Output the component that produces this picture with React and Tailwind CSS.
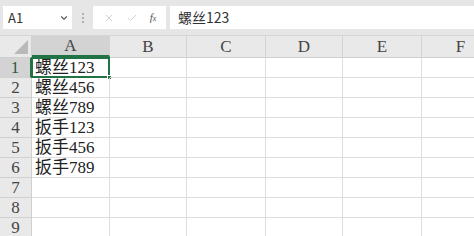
import { ChevronDown, X, Check } from "lucide-react";

const cols = ["A", "B", "C", "D", "E", "F"];
const widths = ["w-[78px]", "w-[77px]", "w-[79px]", "w-[77px]", "w-[79px]", "w-[78px]"];
const data = ["螺丝123", "螺丝456", "螺丝789", "扳手123", "扳手456", "扳手789"];
const rows = [1, 2, 3, 4, 5, 6, 7, 8, 9];

const serif = "font-['Liberation_Serif','Noto_Sans_CJK_SC',serif]";

export default function App() {
  return (
    <div className="w-[474px] h-[236px] overflow-hidden bg-white font-['Noto_Sans_CJK_SC',sans-serif]">
      {/* formula bar */}
      <div className="flex h-[36px] items-start bg-[#e6e6e6] pt-[6px] pl-[3px] border-b border-[#d5d5d5]">
        <div className="flex h-[23px] w-[69px] items-center justify-between bg-white pl-[5px] pr-[3px] text-[13px] text-[#333]">
          <span>A1</span>
          <ChevronDown size={10} strokeWidth={3} className="text-[#666]" />
        </div>
        <div className="flex h-[23px] w-[21px] flex-col items-center justify-center gap-[2px]">
          <span className="h-[2px] w-[2px] bg-[#b0b0b0]" />
          <span className="h-[2px] w-[2px] bg-[#b0b0b0]" />
          <span className="h-[2px] w-[2px] bg-[#b0b0b0]" />
        </div>
        <div className="flex h-[23px] w-[73px] items-center justify-around bg-white px-[4px]">
          <X size={12} strokeWidth={1.5} className="text-[#c4c4c4]" />
          <Check size={12} strokeWidth={1.5} className="text-[#c4c4c4]" />
          <span className={`${serif} italic text-[11px] text-[#555]`}>
            f<span className="text-[8px]">x</span>
          </span>
        </div>
        <div className="ml-[4px] flex h-[23px] flex-1 items-center bg-white pl-[8px] text-[14px] text-[#333]">
          螺丝123
        </div>
      </div>

      {/* sheet */}
      <div className="flex h-[22px] bg-[#e9e9e9] border-b border-[#cfcfcf]">
        <div className="relative w-[32px] shrink-0 border-r border-[#d0d0d0]">
          <div className="absolute bottom-[3px] right-[3px] h-0 w-0 [border-bottom:14px_solid_#b9b9b9] [border-left:14px_solid_transparent]" />
        </div>
        {cols.map((c, i) => (
          <div
            key={c}
            className={`${widths[i]} shrink-0 flex items-center justify-center border-r border-[#d4d4d4] ${serif} text-[17px] text-[#444] ${
              i === 0 ? "bg-[#d3d3d3] border-b-2 border-b-[#217346]" : ""
            }`}
          >
            {c}
          </div>
        ))}
      </div>
      {rows.map((r) => (
        <div key={r} className="flex h-[20px]">
          <div
            className={`w-[32px] shrink-0 flex items-center justify-center border-r border-b border-[#d0d0d0] ${serif} text-[17px] ${
              r === 1 ? "bg-[#d3d3d3] text-[#2b5b3e] border-r-2 border-r-[#217346]" : "bg-[#e9e9e9] text-[#444]"
            }`}
          >
            {r}
          </div>
          {cols.map((c, i) => (
            <div
              key={c}
              className={`relative ${widths[i]} shrink-0 flex items-center border-r border-b border-[#dedede] pl-[3px] ${serif} text-[17px] leading-none text-[#222]`}
            >
              {i === 0 ? data[r - 1] : null}
              {i === 0 && r === 1 && (
                <>
                  <div className="absolute -left-[1px] -top-[1px] -right-[1px] -bottom-[1px] border-2 border-[#217346]" />
                  <div className="absolute -bottom-[3px] -right-[3px] h-[5px] w-[5px] bg-[#217346] border border-white" />
                </>
              )}
            </div>
          ))}
        </div>
      ))}
    </div>
  );
}
